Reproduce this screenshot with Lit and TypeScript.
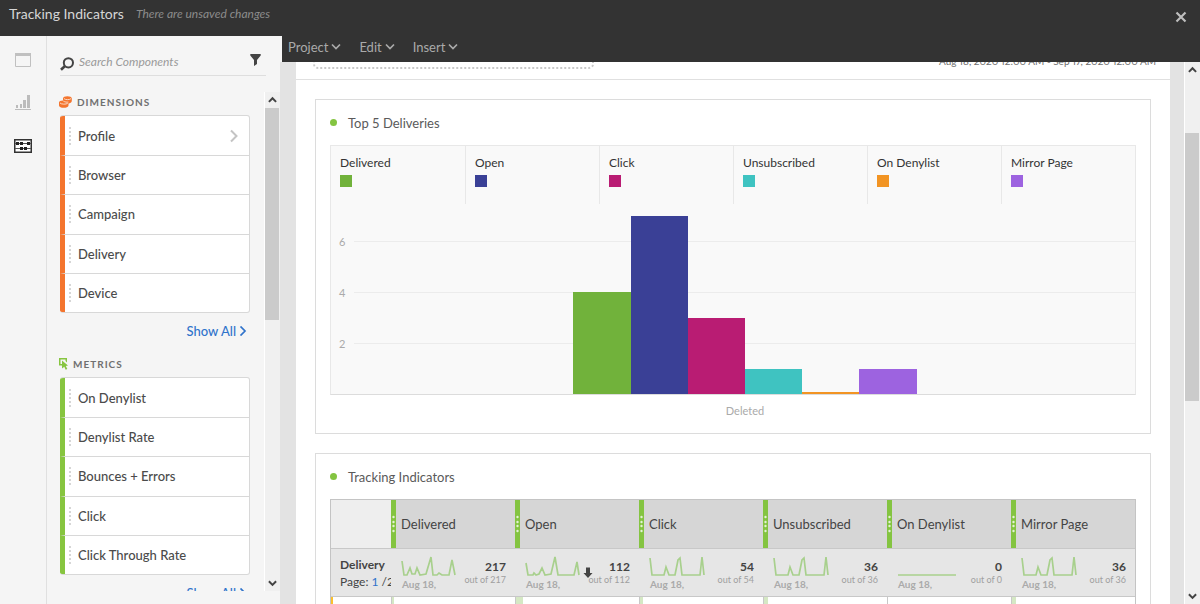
import { LitElement, html, svg, css, nothing } from "lit";
import { customElement, property } from "lit/decorators.js";

interface Series {
  name: string;
  color: string;
  value: number;
}

interface Metric {
  name: string;
  total: number;
  trend: string;
  sorted?: boolean;
  share: number;
}

const SERIES: Series[] = [
  { name: "Delivered", color: "#71b23b", value: 4 },
  { name: "Open", color: "#3a4096", value: 7 },
  { name: "Click", color: "#b91c73", value: 3 },
  { name: "Unsubscribed", color: "#3fc3c1", value: 1 },
  { name: "On Denylist", color: "#f29423", value: 0 },
  { name: "Mirror Page", color: "#9d63e0", value: 1 },
];

const CLICK_TREND = "1,2 3,19 15,19 17,11 20,19 26,19 29,4 31,2 33,19 51,19 53,1 55,19";

const METRICS: Metric[] = [
  {
    name: "Delivered",
    total: 217,
    share: 2,
    trend:
      "1,5 3,19 6,19 9,12 11,18 14,18 16,12 19,19 25,18 30,1 32,19 36,19 38,17 41,19 48,19 51,4 54,19",
  },
  {
    name: "Open",
    total: 112,
    share: 7,
    sorted: true,
    trend: "1,7 3,19 8,19 9,17 11,19 14,18 17,12 20,19 26,18 30,1 33,19 49,19 52,6 54,19",
  },
  { name: "Click", total: 54, share: 3, trend: CLICK_TREND },
  { name: "Unsubscribed", total: 36, share: 4, trend: CLICK_TREND },
  { name: "On Denylist", total: 0, share: 0, trend: "1,19 59,19" },
  { name: "Mirror Page", total: 36, share: 4, trend: CLICK_TREND },
];

const UNIT = 25.4;

const chevron = (direction: "down" | "up" | "right") => {
  const paths = {
    down: "M1 2.5 L5 6.5 L9 2.5",
    up: "M1 6.5 L5 2.5 L9 6.5",
    right: "M2.5 0.5 L7 5 L2.5 9.5",
  };
  return html`<svg class="chevron" viewBox="0 0 10 10" width="10" height="10" aria-hidden="true">
    <path d=${paths[direction]} fill="none" stroke="currentColor" stroke-width="1.7" />
  </svg>`;
};

@customElement("scroll-rail")
export class ScrollRail extends LitElement {
  @property({ type: Number }) before = 0;
  @property({ type: Number }) size = 0;

  static styles = css`
    :host {
      display: flex;
      flex-direction: column;
      flex: none;
      width: 14px;
      padding-right: 1px;
      border-left: 1px solid #fff;
      background: #f0f0f0;
    }
    button {
      display: grid;
      place-items: center;
      flex: none;
      height: 16px;
      padding: 0;
      border: 0;
      background: none;
      color: #444;
    }
    .track {
      flex: 1;
      min-height: 0;
    }
    .thumb {
      background: #cbcbcb;
    }
    path {
      stroke-width: 2.2;
    }
    svg {
      width: 9px;
      height: 9px;
    }
  `;

  render() {
    return html`
      <button aria-label="Scroll up">${chevron("up")}</button>
      <div class="track">
        <div style="height:${this.before}px"></div>
        <div class="thumb" style="height:${this.size}px"></div>
      </div>
      <button aria-label="Scroll down">${chevron("down")}</button>
    `;
  }
}

@customElement("component-list")
export class ComponentList extends LitElement {
  @property() heading = "";
  @property() kind: "dimension" | "metric" = "dimension";
  @property({ attribute: false }) items: string[] = [];

  static styles = css`
    :host {
      display: block;
      color: #4b4b4b;
    }
    h2 {
      display: flex;
      align-items: center;
      gap: 5px;
      height: 20px;
      margin: 0 0 3px -1px;
      font-size: 10px;
      font-weight: 700;
      letter-spacing: 1px;
      text-transform: uppercase;
      color: #707070;
    }
    ul {
      display: grid;
      grid-auto-rows: 1fr;
      height: 196px;
      margin: 0;
      padding: 0;
      list-style: none;
      border: 1px solid #d8d8d8;
      border-left-width: 0;
      border-radius: 3px;
      overflow: hidden;
      background: #fff;
    }
    li {
      display: flex;
      align-items: center;
      gap: 7px;
      padding-right: 9px;
      border-left: 5px solid #f4752e;
      font-size: 13px;
      font-weight: 500;
    }
    li + li {
      border-top: 1px solid #d8d8d8;
    }
    .metric li {
      border-left-color: #87c540;
    }
    .grip {
      width: 2px;
      height: 18px;
      margin-left: 4px;
      background: repeating-linear-gradient(#d6d6d6 0 2px, transparent 2px 4px);
    }
    .label {
      flex: 1;
    }
    .more {
      color: #c4c4c4;
      width: 12px;
      height: 14px;
    }
    .all {
      display: flex;
      justify-content: flex-end;
      align-items: center;
      height: 36px;
      padding-right: 2px;
    }
    a {
      display: flex;
      align-items: center;
      gap: 2px;
      font-size: 13px;
      font-weight: 500;
      color: #3073cb;
      text-decoration: none;
    }
  `;

  private icon() {
    return this.kind === "dimension"
      ? html`<svg width="13" height="12" viewBox="0 0 13 12" aria-hidden="true">
          <path
            fill="#f4752e"
            d="M4 2.5 C4 .9 6 .2 8.400 .2 S12.800 .9 12.800 2.500 V5 C12.800 6.500 11 7.400 9.500 7.500 V9.500 C9.500 11 7 11.800 4.700 11.800 S0 11 0 9.500 V6.500 C0 5.400 1.500 4.700 4 4.600Z"
          />
          <path
            fill="none"
            stroke="#fbe3d5"
            stroke-width=".9"
            d="M5 2.600 C6 4 11 4 12 2.600 M1 7 C2 8.400 7.300 8.600 8.800 7.200 M4.300 5 C6 6.200 8 6.300 9.400 6"
          />
        </svg>`
      : html`<svg width="9" height="12" viewBox="0 0 9 12" aria-hidden="true">
          <path fill="#87c540" d="M0 0H8V4.500L6.500 3V1.500H1.500V6H3V7.500H0Z" />
          <path fill="#87c540" d="M3 2.500 L9 7.500 L6.800 7.900 L8.300 11 L6.700 11.800 L5.300 8.800 L3 10.400Z" />
        </svg>`;
  }

  render() {
    return html`
      <h2>${this.icon()}${this.heading}</h2>
      <ul class=${this.kind}>
        ${this.items.map(
          (item, i) => html`<li>
            <span class="grip"></span>
            <span class="label">${item}</span>
            ${this.kind === "dimension" && i === 0
              ? html`<svg class="more" viewBox="0 0 12 14" aria-hidden="true">
                  <path d="M3 1.500 L8.500 7 L3 12.500" fill="none" stroke="currentColor" stroke-width="2" />
                </svg>`
              : nothing}
          </li>`
        )}
      </ul>
      <div class="all"><a href="#">Show All ${chevron("right")}</a></div>
    `;
  }
}

@customElement("deliveries-chart")
export class DeliveriesChart extends LitElement {
  static styles = css`
    :host {
      display: block;
    }
    .frame {
      border: 1px solid #e8e8e8;
      border-bottom-color: #dcdcdc;
      background: #f9f9f9;
    }
    .legend {
      display: grid;
      grid-template-columns: repeat(6, 1fr);
      height: 58px;
    }
    .entry {
      display: flex;
      flex-direction: column;
      gap: 4px;
      padding: 9px 9px 0;
      font-size: 12px;
      line-height: 16px;
      color: #333;
    }
    .entry + .entry {
      border-left: 1px solid #e8e8e8;
    }
    .swatch {
      width: 12px;
      height: 12px;
    }
    .plot {
      display: grid;
      height: 190px;
    }
    .scale,
    .bars {
      grid-area: 1 / 1;
    }
    .scale {
      display: flex;
      flex-direction: column;
      justify-content: flex-end;
      padding-bottom: 25px;
    }
    .tick {
      display: flex;
      align-items: center;
      height: 51px;
      font-size: 11px;
      color: #aaa;
    }
    .tick span {
      width: 15px;
      padding-left: 8px;
    }
    .tick hr {
      flex: 1;
      height: 1px;
      margin: 0;
      border: 0;
      background: #ececec;
    }
    .bars {
      display: flex;
      align-items: flex-end;
      justify-content: center;
      padding-left: 24px;
    }
    .bar {
      width: 7.330%;
      min-height: 2px;
    }
    .category {
      padding: 8px 0 0 24px;
      text-align: center;
      font-size: 11px;
      line-height: 16px;
      color: #aaa;
    }
  `;

  render() {
    return html`
      <div class="frame">
        <div class="legend">
          ${SERIES.map(
            (s) => html`<div class="entry">
              <span>${s.name}</span>
              <span class="swatch" style="background:${s.color}"></span>
            </div>`
          )}
        </div>
        <div class="plot">
          <div class="scale">
            ${[6, 4, 2].map((n) => html`<div class="tick"><span>${n}</span><hr /></div>`)}
          </div>
          <div class="bars">
            ${SERIES.map(
              (s) => html`<div
                class="bar"
                style="height:${Math.round(s.value * UNIT)}px;background:${s.color}"
              ></div>`
            )}
          </div>
        </div>
      </div>
      <div class="category">Deleted</div>
    `;
  }
}

@customElement("indicator-table")
export class IndicatorTable extends LitElement {
  static styles = css`
    :host {
      display: block;
    }
    table {
      width: 100%;
      table-layout: fixed;
      border-collapse: separate;
      border-spacing: 0;
      border: 1px solid #c4c4c4;
      color: #444;
    }
    .first {
      width: 60px;
    }
    th,
    td {
      padding: 0;
      text-align: left;
      font-weight: 400;
      overflow: hidden;
    }
    thead th {
      height: 48px;
      background: #d6d6d6;
      border-bottom: 1px solid #c8c8c8;
      font-size: 13px;
    }
    thead .corner {
      background: #eee;
    }
    .head {
      display: flex;
      align-items: center;
      gap: 5px;
      height: 48px;
    }
    .handle {
      display: grid;
      place-items: center;
      width: 5px;
      height: 48px;
      background: #84c441;
    }
    .totals th,
    .totals td {
      height: 47px;
      background: #e6e6e6;
      border-bottom: 1px solid #c8c8c8;
    }
    .row-name {
      padding-left: 9px;
      font-size: 12px;
      line-height: 17px;
      white-space: nowrap;
    }
    .row-name a {
      color: #3073cb;
      text-decoration: none;
    }
    .total {
      display: flex;
      justify-content: space-between;
      align-items: center;
      padding: 0 9px 0 10px;
    }
    .trend {
      display: flex;
      flex-direction: column;
      width: 54px;
      font-size: 10px;
      line-height: 12px;
      font-weight: 700;
      color: #aaa;
    }
    .trend svg {
      overflow: visible;
    }
    .trend span {
      padding: 1px 0 0 1px;
    }
    .sort {
      flex: none;
      margin: 0 -8px 0 0;
    }
    .numbers {
      display: flex;
      flex-direction: column;
      align-items: flex-end;
      font-size: 9px;
      line-height: 13px;
      white-space: nowrap;
      color: #a0a0a0;
    }
    .numbers b {
      font-size: 12px;
      color: #444;
    }
    .detail td {
      height: 40px;
      background: #fff;
    }
    .detail td + td {
      border-left: 1px solid #c8c8c8;
    }
    .share {
      height: 40px;
      background: #d5e8c4;
    }
    .marker {
      width: 2px;
      height: 40px;
      background: #fbc02d;
    }
  `;

  private total(m: Metric) {
    return html`<td>
      <div class="total">
        <div class="trend">
          <svg width="54" height="21" viewBox="0 0 54 21" aria-hidden="true">
            <polyline points=${m.trend} fill="none" stroke="#a8d08d" stroke-width="1.700" />
          </svg>
          <span>Aug 18,</span>
        </div>
        ${m.sorted
          ? html`<svg class="sort" width="10" height="12" viewBox="0 0 10 12" aria-label="Sorted descending">
              <path d="M3 0.500H7V6H9.500L5 11L.5 6H3Z" fill="#444" />
            </svg>`
          : nothing}
        <div class="numbers"><b>${m.total}</b><span>out of ${m.total}</span></div>
      </div>
    </td>`;
  }

  render() {
    return html`
      <table>
        <thead>
          <tr>
            <th class="first corner"></th>
            ${METRICS.map(
              (m) => html`<th scope="col">
                <div class="head">
                  <svg class="handle" viewBox="0 0 5 48" aria-hidden="true">
                    ${[17, 22, 26, 31].map(
                      (y) => svg`<circle cx="2.500" cy=${y} r="1.200" fill="#e3f2d3" />`
                    )}
                  </svg>
                  ${m.name}
                </div>
              </th>`
            )}
          </tr>
        </thead>
        <tbody>
          <tr class="totals">
            <th scope="row">
              <div class="row-name"><b>Delivery</b><br />Page: <a href="#">1</a> /20</div>
            </th>
            ${METRICS.map((m) => this.total(m))}
          </tr>
          <tr class="detail">
            <td><div class="marker"></div></td>
            ${METRICS.map(
              (m) => html`<td><div class="share" style="width:${m.share}px"></div></td>`
            )}
          </tr>
        </tbody>
      </table>
    `;
  }
}

@customElement("app-root")
export class AppRoot extends LitElement {
  static styles = css`
    :host {
      display: flex;
      flex-direction: column;
      height: 100vh;
      overflow: hidden;
      font-family: Lato, "Open Sans", sans-serif;
      color: #4b4b4b;
      background: #e3e3e3;
    }
    button,
    input {
      font-family: inherit;
    }
    button {
      padding: 0;
      border: 0;
      background: none;
    }
    .topbar {
      display: flex;
      align-items: center;
      gap: 12px;
      flex: none;
      height: 26px;
      padding: 0 13px 10px 9px;
      background: #333;
    }
    h1 {
      margin: 0;
      font-size: 14px;
      font-weight: 400;
      color: #d6d6d6;
    }
    .status {
      flex: 1;
      font-size: 12px;
      font-style: italic;
      color: #8c8c8c;
    }
    .close {
      display: grid;
      padding-top: 7px;
    }
    .body {
      display: flex;
      flex: 1;
      min-height: 0;
    }
    .rail {
      display: flex;
      flex-direction: column;
      align-items: center;
      gap: 28px;
      flex: none;
      width: 47px;
      padding-top: 16px;
      box-sizing: border-box;
      background: #f5f5f5;
      border-right: 1px solid #e0e0e0;
    }
    .rail button {
      display: grid;
      place-items: center;
      width: 18px;
      height: 15px;
    }
    .panel {
      display: flex;
      flex-direction: column;
      flex: none;
      width: 233px;
      box-sizing: border-box;
      padding-bottom: 13px;
      background: #f5f5f5;
    }
    .search {
      display: flex;
      align-items: center;
      gap: 4px;
      height: 28px;
      margin: 11px 14px 16px 13px;
      border-bottom: 1px solid #dedede;
    }
    .search label {
      display: grid;
      padding-top: 6px;
    }
    .search input {
      flex: 1;
      min-width: 0;
      padding: 0;
      border: 0;
      background: none;
      font-size: 12px;
      font-style: italic;
      outline: none;
    }
    .search input::placeholder {
      color: #9a9a9a;
    }
    .filter {
      display: grid;
      padding: 0 5px 2px 0;
    }
    .components {
      display: flex;
      flex: 1;
      min-height: 0;
      overflow: hidden;
    }
    .lists {
      display: flex;
      flex-direction: column;
      gap: 5px;
      flex: 1;
      padding: 0 14px 0 13px;
    }
    .workspace {
      display: flex;
      flex-direction: column;
      flex: 1;
      min-width: 0;
    }
    .menus {
      display: flex;
      gap: 18px;
      flex: none;
      height: 26px;
      padding-left: 6px;
      background: #333;
      border-left: 2px solid #f5f5f5;
    }
    .menus button {
      display: flex;
      align-items: center;
      gap: 3px;
      height: 21px;
      font-size: 13px;
      color: #aaa;
    }
    .canvas {
      display: flex;
      flex: 1;
      min-height: 0;
    }
    .page {
      flex: 1;
      min-width: 0;
      margin: 0 14px 0 16px;
      background: #fff;
      overflow: hidden;
    }
    .filters {
      display: flex;
      justify-content: space-between;
      align-items: flex-end;
      height: 7px;
      padding: 0 14px 10px 17px;
      overflow: hidden;
      border-bottom: 1px solid #e0e0e0;
    }
    .dropzone {
      flex: none;
      width: 277px;
      height: 40px;
      border: 2px dotted #c9c9c9;
      border-radius: 5px;
    }
    .dates {
      flex: none;
      font-size: 10px;
      line-height: 16px;
      font-variant-numeric: proportional-nums;
      color: #707070;
    }
    .card {
      margin: 19px 19px 0;
      padding: 0 14px 14px;
      border: 1px solid #dcdcdc;
      background: #fff;
    }
    h2 {
      display: flex;
      align-items: center;
      gap: 11px;
      height: 45px;
      margin: 0;
      font-size: 13px;
      font-weight: 400;
      color: #5a5a5a;
    }
    .dot {
      width: 7px;
      height: 7px;
      border-radius: 50%;
      background: #84c441;
    }
  `;

  render() {
    return html`
      <header class="topbar">
        <h1>Tracking Indicators</h1>
        <span class="status">There are unsaved changes</span>
        <button class="close" aria-label="Close">
          <svg width="12" height="12" viewBox="0 0 12 12">
            <path d="M1.500 1.500L10.500 10.500M10.500 1.500L1.500 10.500" stroke="#bebebe" stroke-width="2.200" />
          </svg>
        </button>
      </header>
      <div class="body">
        <nav class="rail">
          <button aria-label="Panels">
            <svg width="16" height="14" viewBox="0 0 16 14">
              <path d="M.5 .5H15.500V13.500H.5Z" fill="none" stroke="#c0c0c0" />
              <path d="M0 0H16V3H0Z" fill="#c0c0c0" />
            </svg>
          </button>
          <button aria-label="Visualizations">
            <svg width="16" height="15" viewBox="0 0 16 15">
              <path d="M1 10H3V13H1ZM5 9H7V13H5ZM8 5H11V13H8ZM12 0H15V13H12ZM0 14H16V15H0Z" fill="#bcbcbc" />
            </svg>
          </button>
          <button aria-label="Components">
            <svg width="18" height="14" viewBox="0 0 18 14">
              <path d="M.75 .75H17.250V13.250H.75Z" fill="#fff" stroke="#333" stroke-width="1.500" />
              <path d="M1 4.500H17M1 9.500H17" stroke="#555" />
              <path d="M2 3H5V6H2ZM6 3H9V6H6ZM13 3H16V6H13ZM6 8H9V11H6ZM10 8H13V11H10Z" fill="#222" />
            </svg>
          </button>
        </nav>
        <aside class="panel">
          <div class="search">
            <label for="search" aria-label="Search Components">
              <svg width="15" height="14" viewBox="0 0 15 14">
                <circle cx="8.400" cy="5.800" r="4.600" fill="none" stroke="#444" stroke-width="2" />
                <path d="M5 9L1 12.800" stroke="#444" stroke-width="2.600" />
              </svg>
            </label>
            <input id="search" type="text" placeholder="Search Components" />
            <button class="filter" aria-label="Filter">
              <svg width="11" height="12" viewBox="0 0 11 12">
                <path d="M.3 0H10.700V1.600L7 6V10L4 12V6L.3 1.600Z" fill="#444" />
              </svg>
            </button>
          </div>
          <div class="components">
            <div class="lists">
              <component-list
                kind="dimension"
                heading="Dimensions"
                .items=${["Profile", "Browser", "Campaign", "Delivery", "Device"]}
              ></component-list>
              <component-list
                kind="metric"
                heading="Metrics"
                .items=${["On Denylist", "Denylist Rate", "Bounces + Errors", "Click", "Click Through Rate"]}
              ></component-list>
            </div>
            <scroll-rail .before=${0} .size=${212}></scroll-rail>
          </div>
        </aside>
        <main class="workspace">
          <div class="menus">
            ${["Project", "Edit", "Insert"].map(
              (name) => html`<button>${name} ${chevron("down")}</button>`
            )}
          </div>
          <div class="canvas">
            <div class="page">
              <div class="filters">
                <div class="dropzone"></div>
                <span class="dates">Aug 18, 2020 12:00 AM - Sep 17, 2020 12:00 AM</span>
              </div>
              <section class="card">
                <h2><span class="dot"></span>Top 5 Deliveries</h2>
                <deliveries-chart></deliveries-chart>
              </section>
              <section class="card">
                <h2><span class="dot"></span>Tracking Indicators</h2>
                <indicator-table></indicator-table>
              </section>
            </div>
            <scroll-rail .before=${55} .size=${268}></scroll-rail>
          </div>
        </main>
      </div>
    `;
  }
}
